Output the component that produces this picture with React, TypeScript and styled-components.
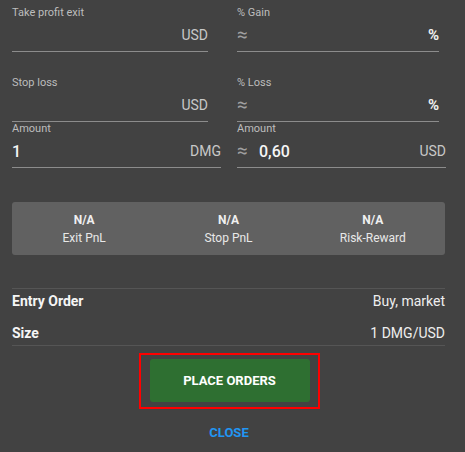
import styled, { createGlobalStyle } from "styled-components";

const GlobalStyle = createGlobalStyle`
  html, body {
    margin: 0;
    padding: 0;
    background: #424242;
    font-family: Roboto, "Liberation Sans", sans-serif;
  }
`;

interface FieldProps {
  label: string;
  unit: string;
  prefix?: string;
  value?: string;
  inset?: number;
  spaced?: boolean;
}

const Field = ({ label, unit, prefix, value, inset = 0, spaced }: FieldProps) => (
  <FieldBox inset={inset} spaced={spaced}>
    <Label>{label}</Label>
    <InputRow>
      {prefix && <Approx>{prefix}</Approx>}
      <Value>{value}</Value>
      <Unit strong={unit === "%"}>{unit}</Unit>
    </InputRow>
  </FieldBox>
);

const stats = [
  { value: "N/A", label: "Exit PnL" },
  { value: "N/A", label: "Stop PnL" },
  { value: "N/A", label: "Risk-Reward" },
];

const App = () => {
  return (
    <>
      <GlobalStyle />
      <Page>
        <Grid>
          <Field label="Take profit exit" unit="USD" inset={13} spaced />
          <Field label="% Gain" unit="%" prefix="≈" inset={7} spaced />
          <Field label="Stop loss" unit="USD" inset={13} />
          <Field label="% Loss" unit="%" prefix="≈" inset={7} />
          <Field label="Amount" unit="DMG" value="1" />
          <Field label="Amount" unit="USD" prefix="≈" value="0,60" />
        </Grid>

        <StatsPanel>
          {stats.map((s) => (
            <Stat key={s.label}>
              <StatValue>{s.value}</StatValue>
              <StatLabel>{s.label}</StatLabel>
            </Stat>
          ))}
        </StatsPanel>

        <Summary>
          <SummaryRow>
            <SummaryKey>Entry Order</SummaryKey>
            <SummaryValue>Buy, market</SummaryValue>
          </SummaryRow>
          <SummaryRow>
            <SummaryKey>Size</SummaryKey>
            <SummaryValue>1 DMG/USD</SummaryValue>
          </SummaryRow>
        </Summary>

        <Actions>
          <Highlight>
            <PlaceButton>PLACE ORDERS</PlaceButton>
          </Highlight>
          <CloseButton>CLOSE</CloseButton>
        </Actions>
      </Page>
    </>
  );
};

export default App;

const Page = styled.div`
  width: 434px;
  padding: 6px 0 0 12px;
  height: 446px;
  overflow: hidden;
`;

const Grid = styled.div`
  display: grid;
  grid-template-columns: 209px 209px;
  column-gap: 16px;
`;

const FieldBox = styled.div<{ inset: number; spaced?: boolean }>`
  margin-right: ${({ inset }) => inset}px;
  margin-bottom: ${({ spaced }) => (spaced ? "24px" : "0")};
`;

const Label = styled.div`
  font-size: 11px;
  line-height: 13px;
  color: #bdbdbd;
`;

const InputRow = styled.div`
  display: flex;
  align-items: center;
  height: 32px;
  border-bottom: 1px solid #8c8c8c;
`;

const Approx = styled.span`
  font-size: 19px;
  line-height: 20px;
  color: #a0a0a0;
  margin-right: 9px;
  width: 13px;
`;

const Value = styled.span`
  flex: 1;
  font-size: 16px;
  font-weight: 500;
  color: #f5f5f5;
`;

const Unit = styled.span<{ strong?: boolean }>`
  font-size: ${({ strong }) => (strong ? "15px" : "14px")};
  font-weight: ${({ strong }) => (strong ? 700 : 400)};
  color: ${({ strong }) => (strong ? "#f0f0f0" : "#c8c8c8")};
`;

const StatsPanel = styled.div`
  margin-top: 34px;
  width: 433px;
  height: 53px;
  background: #616161;
  border-radius: 3px;
  display: grid;
  grid-template-columns: repeat(3, 1fr);
  align-items: center;
`;

const Stat = styled.div`
  display: flex;
  flex-direction: column;
  align-items: center;
  gap: 4px;
`;

const StatValue = styled.span`
  font-size: 12px;
  font-weight: 700;
  color: #f0f0f0;
  line-height: 14px;
`;

const StatLabel = styled.span`
  font-size: 12px;
  color: #e8e8e8;
  line-height: 14px;
`;

const Summary = styled.div`
  margin-top: 33px;
  width: 433px;
  border-top: 1px solid #555555;
  border-bottom: 1px solid #555555;
  display: flex;
  flex-direction: column;
  gap: 8px;
`;

const SummaryRow = styled.div`
  display: flex;
  justify-content: space-between;
  align-items: center;
  height: 24px;
`;

const SummaryKey = styled.span`
  font-size: 14px;
  font-weight: 700;
  color: #f5f5f5;
`;

const SummaryValue = styled.span`
  font-size: 14px;
  color: #eeeeee;
`;

const Actions = styled.div`
  display: flex;
  flex-direction: column;
  align-items: center;
  padding-top: 7px;
`;

const Highlight = styled.div`
  border: 2px solid #ff0000;
  padding: 4px 8px 5px 9px;
`;

const PlaceButton = styled.button`
  width: 160px;
  height: 43px;
  border: none;
  border-radius: 3px;
  background: #2e6f31;
  color: #ffffff;
  font-family: Roboto, "Liberation Sans", sans-serif;
  font-size: 13px;
  font-weight: 700;
  cursor: pointer;
`;

const CloseButton = styled.button`
  margin-top: 15px;
  background: none;
  border: none;
  color: #2196f3;
  font-family: Roboto, "Liberation Sans", sans-serif;
  font-size: 13px;
  font-weight: 700;
  cursor: pointer;
`;
